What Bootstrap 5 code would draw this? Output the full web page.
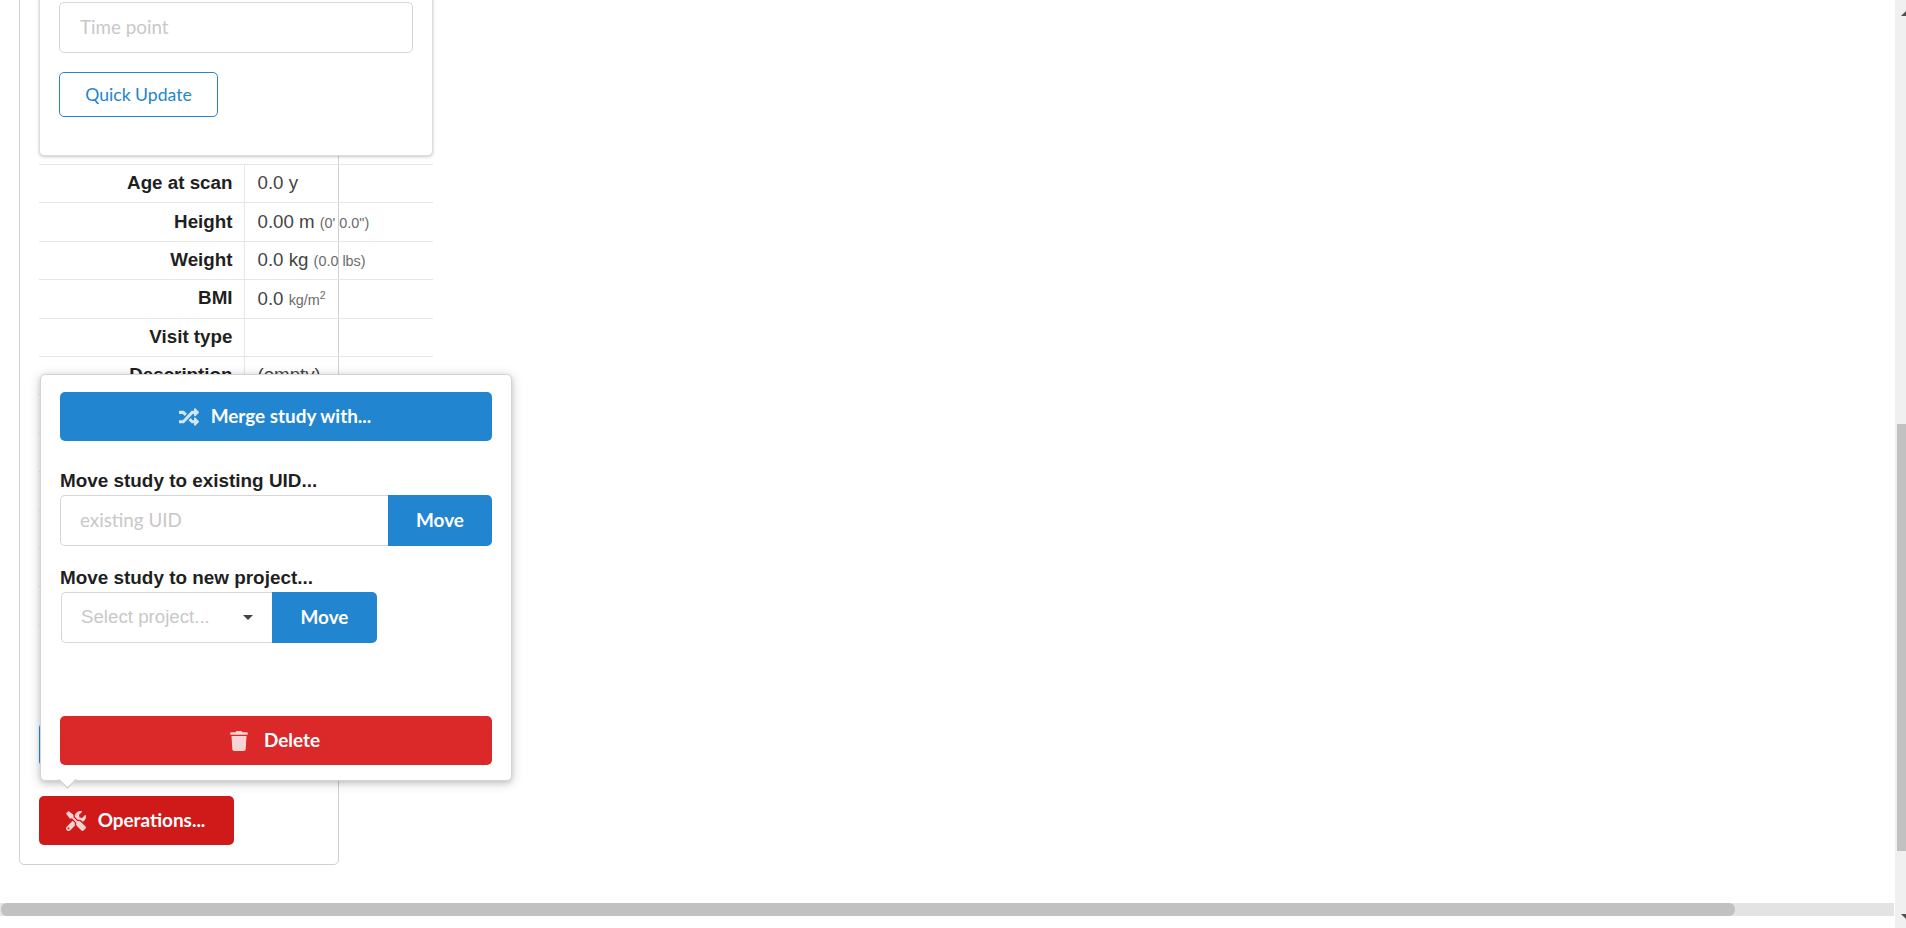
<!DOCTYPE html>
<html lang="en">
<head>
<meta charset="utf-8">
<title>Study</title>
<link href="https://cdn.jsdelivr.net/npm/bootstrap@5.3.0/dist/css/bootstrap.min.css" rel="stylesheet">
<style>
html,body{height:100%;overflow:hidden;background:#fff;color:#1f1f1f;font-family:"Liberation Sans",Arial,sans-serif;}
.viewport-clip{height:928px;width:1906px;overflow:hidden;position:relative;}
.outer-box{width:320px;margin-left:19px;margin-top:-68px;height:933px;border:1px solid #d0d0d0;border-radius:5px;padding:0 19px;background:#fff;display:flex;flex-direction:column;}
.quick-box{width:394px;flex:none;border:1px solid #dcdcdc;border-radius:5px;box-shadow:0 1px 3px rgba(34,36,38,.25);padding:44px 19px 38px;background:#fff;position:relative;z-index:1;}
.field-lbl{display:block;font-weight:700;font-size:17.8px;line-height:24px;margin:0;color:#1f1f1f;white-space:nowrap;}
.ui-input{font-family:Lato,sans-serif;font-size:18.8px;height:51px;border:1px solid #d6d6d6;border-radius:5px;padding:0 20px 2px;box-shadow:none;color:#333;}
.ui-input::placeholder{color:#c8c8c8;opacity:1;}
.pop-input{padding-left:19px;}
.btn-quick{font-family:Lato,sans-serif;font-size:17.6px;line-height:1;height:45px;width:159px;margin-top:19px;border:1.5px solid #2185d0;border-radius:5px;color:#2185d0;background:#fff;padding:0;}
.info-table{width:394px;flex:none;margin:8px 0 0;border-top:1px solid #e6e6e6;border-collapse:collapse;--bs-table-bg:transparent;}
.info-table th,.info-table td{height:38.4px;padding:0 11px 0 13px;border-bottom:1px solid #e6e6e6;vertical-align:middle;line-height:1;background:transparent;box-shadow:none;}
.info-table th{width:205px;text-align:right;font-weight:700;font-size:18.8px;color:#1f1f1f;border-right:1px solid #e6e6e6;}
.info-table td{color:#444;font-size:18.7px;}
.info-table .unit{font-size:14.4px;color:#6b6b6b;}
.info-table sup{font-size:10.5px;top:-.5em;}
.sliver-btn{flex:none;margin-top:auto;height:43px;width:195px;background:#2185d0;border-radius:5px;}
.ops-anchor{position:relative;flex:none;margin:30px 0 19px;width:195px;}
.solid-btn{font-family:Lato,sans-serif;font-weight:700;font-size:18.9px;line-height:1;height:49px;border:0;border-radius:5px;color:#fff;display:flex;align-items:center;justify-content:center;gap:12px;padding:0 2px 0 0;}
.solid-btn svg{flex:none;opacity:.8;}
.btn-blue{background:#2185d0;}
.btn-blue:hover{background:#2185d0;color:#fff;}
.btn-danger-soft{background:#db2828;}
.btn-danger-soft:hover{background:#db2828;color:#fff;}
.btn-ops{background:#d01919;width:195px;}
.btn-ops:hover{background:#d01919;color:#fff;}
.ops-pop{position:absolute;left:1px;bottom:64px;width:472px;height:407px;background:#fff;border:1px solid #d4d4d5;border-radius:5px;box-shadow:0 2px 5px rgba(34,36,38,.15),0 2px 12px rgba(34,36,38,.2);padding:17px 19px 15px;z-index:5;display:flex;flex-direction:column;}
.ops-pop::after{content:"";position:absolute;left:20px;bottom:-6px;width:13px;height:13px;background:#fff;border-right:1px solid #c8c8c8;border-bottom:1px solid #c8c8c8;transform:rotate(45deg);}
.move-lbl{font-weight:700;font-size:18.9px;line-height:24px;margin:0 0 2px;color:#1f1f1f;white-space:nowrap;}
.move-btn{font-family:Lato,sans-serif;font-weight:700;font-size:18.9px;height:51px;width:104px;flex:none;border:0;background:#2185d0;color:#fff;padding:0;border-radius:0 5px 5px 0;}
.move-btn:hover{background:#2185d0;color:#fff;}
.move-wide{width:105px;}
.fake-select{width:211px;height:51px;flex:none;margin-left:1px;border:1px solid #d6d6d6;border-right:0;border-radius:5px 0 0 5px;padding:0 20px 0 19px;display:flex;align-items:center;justify-content:space-between;color:#c8c8c8;font-size:18.7px;}
.caret-tri{width:0;height:0;border-left:5px solid transparent;border-right:5px solid transparent;border-top:5px solid #444;margin-right:-1px;}
.vbar{position:absolute;top:0;right:0;width:11px;height:928px;background:#f0f0f0;z-index:10;}
.vbar-thumb{position:absolute;left:2px;right:0;top:424px;height:427px;background:#c1c1c1;}
.vbar-up,.vbar-down{position:absolute;right:0;width:0;height:0;border-style:solid;}
.vbar-up{top:11px;border-width:0 0 5px 5px;border-color:transparent transparent #505050 transparent;}
.vbar-down{bottom:9px;border-width:5px 0 0 5px;border-color:#505050 transparent transparent transparent;}
.hbar{position:absolute;left:0;bottom:12px;width:1894px;height:13px;background:#e3e3e3;z-index:10;}
.hbar-thumb{position:absolute;left:1px;top:0;width:1734px;height:13px;background:#c1c1c1;border-radius:6px;}
</style>
</head>
<body>
<div class="viewport-clip">
  <div class="outer-box">
    <div class="quick-box">
      <label class="field-lbl" for="tp">Visit time point</label>
      <input id="tp" class="form-control ui-input" placeholder="Time point">
      <button type="button" class="btn btn-quick d-block">Quick Update</button>
    </div>
    <table class="table info-table">
      <tbody>
        <tr><th>Age at scan</th><td>0.0 y</td></tr>
        <tr><th>Height</th><td>0.00 m <span class="unit">(0' 0.0")</span></td></tr>
        <tr><th>Weight</th><td>0.0 kg <span class="unit">(0.0 lbs)</span></td></tr>
        <tr><th>BMI</th><td>0.0 <span class="unit">kg/m<sup>2</sup></span></td></tr>
        <tr><th>Visit type</th><td></td></tr>
        <tr><th>Description</th><td>(empty)</td></tr>
        <tr><th>&nbsp;</th><td></td></tr>
        <tr><th>&nbsp;</th><td></td></tr>
        <tr><th>&nbsp;</th><td></td></tr>
        <tr><th>&nbsp;</th><td></td></tr>
        <tr><th>&nbsp;</th><td></td></tr>
        <tr><th>&nbsp;</th><td></td></tr>
      </tbody>
    </table>
    <div class="sliver-btn"></div>
    <div class="ops-anchor">
      <div class="ops-pop">
        <button type="button" class="btn solid-btn btn-blue w-100">
          <svg width="20" height="20" viewBox="0 0 512 512" fill="#fff"><path d="M504.971 359.029c9.373 9.373 9.373 24.569 0 33.941l-80 79.984c-15.010 15.010-40.971 4.490-40.971-16.971V416h-58.785a12.004 12.004 0 0 1-8.773-3.812l-70.556-75.596 53.333-57.143L352 336h32v-39.981c0-21.438 25.943-31.998 40.971-16.971l80 79.981zM12 176h84l52.781 56.551 53.333-57.143-70.556-75.596A11.999 11.999 0 0 0 122.785 96H12c-6.627 0-12 5.373-12 12v56c0 6.627 5.373 12 12 12zm372 0v39.984c0 21.460 25.961 31.980 40.971 16.971l80-79.984c9.373-9.373 9.373-24.569 0-33.941l-80-79.981C409.943 24.021 384 34.582 384 56.019V96h-58.785a12.004 12.004 0 0 0-8.773 3.812L96 336H12c-6.627 0-12 5.373-12 12v56c0 6.627 5.373 12 12 12h110.785c3.326 0 6.503-1.381 8.773-3.812L352 176h32z"/></svg>
          <span>Merge study with...</span>
        </button>
        <p class="move-lbl mt-4 pt-1">Move study to existing UID...</p>
        <div class="d-flex">
          <input class="form-control ui-input pop-input rounded-end-0 border-end-0" placeholder="existing UID">
          <button type="button" class="btn move-btn">Move</button>
        </div>
        <p class="move-lbl mt-3 pt-1">Move study to new project...</p>
        <div class="d-flex">
          <div class="fake-select"><span>Select project...</span><span class="caret-tri"></span></div>
          <button type="button" class="btn move-btn move-wide">Move</button>
        </div>
        <button type="button" class="btn solid-btn btn-danger-soft w-100 mt-auto">
          <svg width="18" height="20" viewBox="0 0 448 512" fill="#fff"><path d="M432 32H312l-9.400-18.700A24 24 0 0 0 281.100 0H166.800a23.720 23.720 0 0 0-21.400 13.300L136 32H16A16 16 0 0 0 0 48v32a16 16 0 0 0 16 16h416a16 16 0 0 0 16-16V48a16 16 0 0 0-16-16zM53.200 467a48 48 0 0 0 47.900 45h245.800a48 48 0 0 0 47.900-45L416 128H32z"/></svg>
          <span class="ms-1">Delete</span>
        </button>
      </div>
      <button type="button" class="btn solid-btn btn-ops">
        <svg width="20" height="20" viewBox="0 0 512 512" fill="#fff"><path d="M501.100 395.700L384 278.600c-23.100-23.100-57.600-27.600-85.400-13.900L192 158.100V96L64 0 0 64l96 128h62.100l106.600 106.600c-13.600 27.800-9.200 62.300 13.900 85.400l117.100 117.100c14.600 14.600 38.200 14.600 52.700 0l52.700-52.700c14.500-14.600 14.500-38.200 0-52.700zM331.700 225c28.300 0 54.900 11 74.900 31l19.400 19.400c15.800-6.900 30.800-16.500 43.800-29.500 37.100-37.100 49.700-89.300 37.900-136.700-2.200-9-13.500-12.100-20.100-5.500l-74.400 74.400-67.900-11.300L334 98.900l74.400-74.400c6.600-6.600 3.400-17.900-5.700-20.200-47.400-11.700-99.600.9-136.600 37.900-28.500 28.500-41.900 66.100-41.100 103.600l82.100 82.100c8.100-1.900 16.500-2.900 24.600-2.900zm-103.900 82l-56.700-56.700L18.700 402.800c-25 25-25 65.500 0 90.500s65.500 25 90.500 0l123.600-123.600c-7.600-19.900-9.900-41.600-5-62.700zM64 472c-13.200 0-24-10.800-24-24 0-13.300 10.700-24 24-24s24 10.700 24 24c0 13.200-10.700 24-24 24z"/></svg>
        <span>Operations...</span>
      </button>
    </div>
  </div>
  <div class="hbar"><div class="hbar-thumb"></div></div>
  <div class="vbar"><span class="vbar-up"></span><div class="vbar-thumb"></div><span class="vbar-down"></span></div>
</div>
<script src="https://cdn.jsdelivr.net/npm/bootstrap@5.3.0/dist/js/bootstrap.bundle.min.js"></script>
</body>
</html>
